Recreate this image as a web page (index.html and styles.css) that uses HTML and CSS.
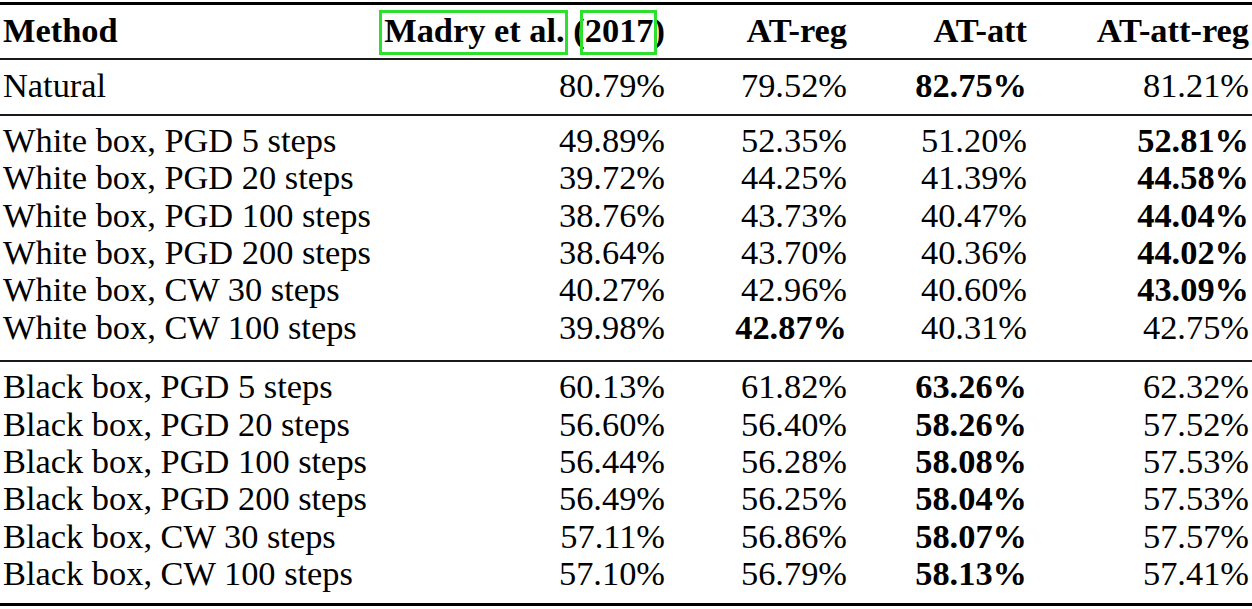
FILE: index.html
```html
<!DOCTYPE html>
<html lang="en">
<head>
<meta charset="utf-8">
<title>Results</title>
<link rel="stylesheet" href="styles.css">
</head>
<body>
<table class="results">
  <colgroup>
    <col class="c-method">
    <col class="c-madry">
    <col class="c-reg">
    <col class="c-att">
    <col class="c-attreg">
  </colgroup>
  <thead>
    <tr>
      <th class="label">Method</th>
      <th class="num"><span class="cite">Madry et al.</span> (<span class="cite">2017</span>)</th>
      <th class="num">AT-reg</th>
      <th class="num">AT-att</th>
      <th class="num">AT-att-reg</th>
    </tr>
  </thead>
  <tbody class="group natural">
    <tr>
      <td class="label">Natural</td>
      <td class="num">80.79%</td>
      <td class="num">79.52%</td>
      <td class="num best">82.75%</td>
      <td class="num">81.21%</td>
    </tr>
  </tbody>
  <tbody class="group white">
    <tr>
      <td class="label">White box, PGD 5 steps</td>
      <td class="num">49.89%</td>
      <td class="num">52.35%</td>
      <td class="num">51.20%</td>
      <td class="num best">52.81%</td>
    </tr>
    <tr>
      <td class="label">White box, PGD 20 steps</td>
      <td class="num">39.72%</td>
      <td class="num">44.25%</td>
      <td class="num">41.39%</td>
      <td class="num best">44.58%</td>
    </tr>
    <tr>
      <td class="label">White box, PGD 100 steps</td>
      <td class="num">38.76%</td>
      <td class="num">43.73%</td>
      <td class="num">40.47%</td>
      <td class="num best">44.04%</td>
    </tr>
    <tr>
      <td class="label">White box, PGD 200 steps</td>
      <td class="num">38.64%</td>
      <td class="num">43.70%</td>
      <td class="num">40.36%</td>
      <td class="num best">44.02%</td>
    </tr>
    <tr>
      <td class="label">White box, CW 30 steps</td>
      <td class="num">40.27%</td>
      <td class="num">42.96%</td>
      <td class="num">40.60%</td>
      <td class="num best">43.09%</td>
    </tr>
    <tr>
      <td class="label">White box, CW 100 steps</td>
      <td class="num">39.98%</td>
      <td class="num best">42.87%</td>
      <td class="num">40.31%</td>
      <td class="num">42.75%</td>
    </tr>
  </tbody>
  <tbody class="group black">
    <tr>
      <td class="label">Black box, PGD 5 steps</td>
      <td class="num">60.13%</td>
      <td class="num">61.82%</td>
      <td class="num best">63.26%</td>
      <td class="num">62.32%</td>
    </tr>
    <tr>
      <td class="label">Black box, PGD 20 steps</td>
      <td class="num">56.60%</td>
      <td class="num">56.40%</td>
      <td class="num best">58.26%</td>
      <td class="num">57.52%</td>
    </tr>
    <tr>
      <td class="label">Black box, PGD 100 steps</td>
      <td class="num">56.44%</td>
      <td class="num">56.28%</td>
      <td class="num best">58.08%</td>
      <td class="num">57.53%</td>
    </tr>
    <tr>
      <td class="label">Black box, PGD 200 steps</td>
      <td class="num">56.49%</td>
      <td class="num">56.25%</td>
      <td class="num best">58.04%</td>
      <td class="num">57.53%</td>
    </tr>
    <tr>
      <td class="label">Black box, CW 30 steps</td>
      <td class="num">57.11%</td>
      <td class="num">56.86%</td>
      <td class="num best">58.07%</td>
      <td class="num">57.57%</td>
    </tr>
    <tr>
      <td class="label">Black box, CW 100 steps</td>
      <td class="num">57.10%</td>
      <td class="num">56.79%</td>
      <td class="num best">58.13%</td>
      <td class="num">57.41%</td>
    </tr>
  </tbody>
</table>
</body>
</html>
```

FILE: styles.css
```css
html, body {
  margin: 0;
  padding: 0;
  background: #ffffff;
}

.results {
  width: 1252px;
  margin-top: 2px;
  table-layout: fixed;
  border-collapse: separate;
  border-spacing: 0;
  font-family: "Liberation Serif", "Times New Roman", serif;
  font-size: 34.4px;
  color: #000000;
}

.c-method { width: 380px; }
.c-madry  { width: 288px; }
.c-reg    { width: 182px; }
.c-att    { width: 180px; }
.c-attreg { width: 222px; }

.results th,
.results td {
  height: 37.4px;
  line-height: 37.4px;
  padding: 0;
  white-space: nowrap;
  vertical-align: baseline;
}

.results th {
  font-weight: bold;
  border-top: 3px solid #000;
  border-bottom: 2px solid #1a1a1a;
  padding-top: 7px;
  padding-bottom: 9px;
}

.results .label {
  text-align: left;
  padding-left: 3px;
}

.results .num {
  text-align: right;
  padding-right: 3px;
}

.results .best {
  font-weight: bold;
}

.cite {
  position: relative;
}

.cite::after {
  content: "";
  position: absolute;
  left: -5px;
  right: -3px;
  top: -1px;
  bottom: -6px;
  border: 3px solid #2ee02e;
  pointer-events: none;
}

/* Natural row */
.natural td {
  padding-top: 7px;
  padding-bottom: 9px;
  border-bottom: 2px solid #1a1a1a;
}

/* White-box group */
.white tr:first-child td { padding-top: 6px; }
.white tr:last-child td {
  padding-bottom: 14px;
  border-bottom: 2px solid #1a1a1a;
}

/* Black-box group */
.black tr:first-child td { padding-top: 6px; }
.black tr:last-child td {
  padding-bottom: 10px;
  border-bottom: 3px solid #000;
}
```
